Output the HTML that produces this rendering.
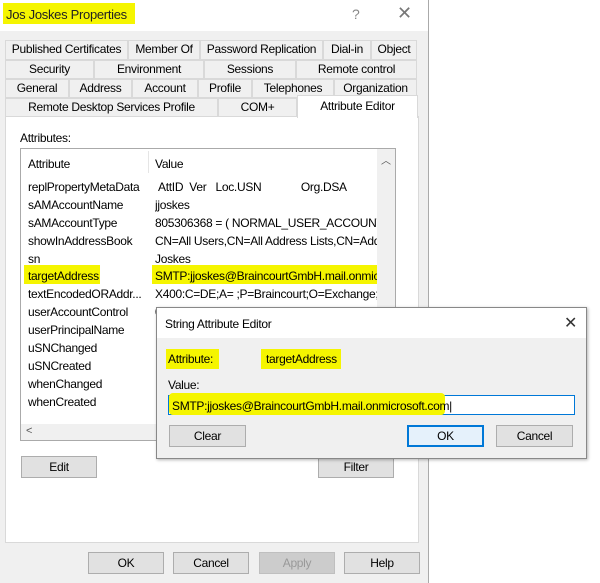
<!DOCTYPE html>
<html><head><style>
*{box-sizing:border-box;margin:0;padding:0}
body{width:600px;height:583px;background:#fff;position:relative;overflow:hidden;font-family:"Liberation Sans",sans-serif;font-size:12px;color:#000;letter-spacing:-0.3px}
.a{position:absolute}
.hl{background:#f5f500}
.tab{position:absolute;background:#f0f0f0;border:1px solid #d9d9d9;text-align:center;line-height:17px;font-size:12px}
.btn{position:absolute;background:#e1e1e1;border:1px solid #adadad;text-align:center;font-size:12px}
.row{position:absolute;left:28px;font-size:12px;white-space:nowrap}
.val{position:absolute;left:155px;font-size:12px;white-space:nowrap;width:222px;overflow:hidden}
</style></head><body>
<div class="a" style="left:0;top:0;width:429px;height:583px;background:#f0f0f0;border-right:1px solid #aaa"></div>
<div class="a" style="left:0;top:0;width:428px;height:31px;background:#fff"></div>
<div class="a hl" style="left:3px;top:3px;width:132px;height:21px"></div>
<div class="a" style="left:6px;top:7px;font-size:13px;color:#222">Jos Joskes Properties</div>
<div class="a" style="left:352px;top:6px;font-size:14px;color:#888">?</div>
<div class="a" style="left:397px;top:3px;font-size:18px;color:#777;font-weight:300">✕</div>

<div class="tab" style="left:5px;top:40px;width:123px;height:20px">Published Certificates</div>
<div class="tab" style="left:128px;top:40px;width:72px;height:20px">Member Of</div>
<div class="tab" style="left:200px;top:40px;width:123px;height:20px">Password Replication</div>
<div class="tab" style="left:323px;top:40px;width:48px;height:20px">Dial-in</div>
<div class="tab" style="left:371px;top:40px;width:46px;height:20px">Object</div>
<div class="tab" style="left:5px;top:60px;width:89px;height:19px">Security</div>
<div class="tab" style="left:94px;top:60px;width:110px;height:19px">Environment</div>
<div class="tab" style="left:204px;top:60px;width:92px;height:19px">Sessions</div>
<div class="tab" style="left:296px;top:60px;width:121px;height:19px">Remote control</div>
<div class="tab" style="left:5px;top:79px;width:64px;height:19px">General</div>
<div class="tab" style="left:69px;top:79px;width:63px;height:19px">Address</div>
<div class="tab" style="left:132px;top:79px;width:66px;height:19px">Account</div>
<div class="tab" style="left:198px;top:79px;width:54px;height:19px">Profile</div>
<div class="tab" style="left:252px;top:79px;width:82px;height:19px">Telephones</div>
<div class="tab" style="left:334px;top:79px;width:83px;height:19px">Organization</div>
<div class="tab" style="left:5px;top:98px;width:213px;height:19px">Remote Desktop Services Profile</div>
<div class="tab" style="left:218px;top:98px;width:79px;height:19px">COM+</div>
<div class="a" style="left:5px;top:116px;width:414px;height:427px;background:#fff;border:1px solid #d9d9d9"></div>
<div class="a" style="left:297px;top:95px;width:121px;height:23px;background:#fff;border:1px solid #d9d9d9;border-bottom:none;text-align:center;line-height:20px">Attribute Editor</div>
<div class="a" style="left:20px;top:131px">Attributes:</div>
<div class="a" style="left:20px;top:148px;width:376px;height:293px;border:1px solid #aaa;background:#fff"></div>
<div class="a" style="left:377px;top:149px;width:18px;height:275px;background:#f0f0f0"></div>
<div class="a" style="left:381px;top:152px;font-size:10px;color:#555">︿</div>
<div class="a" style="left:21px;top:424px;width:374px;height:16px;background:#f0f0f0"></div>
<div class="a" style="left:26px;top:425px;font-size:11px;color:#555">&lt;</div>
<div class="a" style="left:148px;top:151px;width:1px;height:22px;background:#e5e5e5"></div>
<div class="row" style="top:157px">Attribute</div>
<div class="val" style="top:157px">Value</div>
<div class="row" style="top:180px">replPropertyMetaData</div><div class="val" style="top:180px">&nbsp;AttID &nbsp;Ver &nbsp;&nbsp;Loc.USN &nbsp;&nbsp;&nbsp;&nbsp;&nbsp;&nbsp;&nbsp;&nbsp;&nbsp;&nbsp;&nbsp;&nbsp;Org.DSA</div>
<div class="row" style="top:198px">sAMAccountName</div><div class="val" style="top:198px">jjoskes</div>
<div class="row" style="top:216px">sAMAccountType</div><div class="val" style="top:216px">805306368 = ( NORMAL_USER_ACCOUNT</div>
<div class="row" style="top:234px">showInAddressBook</div><div class="val" style="top:234px">CN=All Users,CN=All Address Lists,CN=Address</div>
<div class="row" style="top:252px">sn</div><div class="val" style="top:252px">Joskes</div>
<div class="a hl" style="left:24px;top:265px;width:76px;height:19px"></div>
<div class="a hl" style="left:152px;top:265px;width:225px;height:19px"></div>
<div class="row" style="top:269px">targetAddress</div><div class="val" style="top:269px">SMTP:jjoskes@BraincourtGmbH.mail.onmicrosoft</div>
<div class="row" style="top:287px">textEncodedORAddr...</div><div class="val" style="top:287px">X400:C=DE;A= ;P=Braincourt;O=Exchange;S</div>
<div class="row" style="top:305px">userAccountControl</div><div class="val" style="top:305px">0x10200 = ( NORMAL_ACCOUNT | DONT_</div>
<div class="row" style="top:323px">userPrincipalName</div>
<div class="row" style="top:341px">uSNChanged</div>
<div class="row" style="top:359px">uSNCreated</div>
<div class="row" style="top:377px">whenChanged</div>
<div class="row" style="top:395px">whenCreated</div>

<div class="btn" style="left:21px;top:456px;width:76px;height:22px;line-height:20px">Edit</div>
<div class="btn" style="left:318px;top:456px;width:76px;height:22px;line-height:20px">Filter</div>
<div class="btn" style="left:88px;top:552px;width:76px;height:22px;line-height:20px">OK</div>
<div class="btn" style="left:173px;top:552px;width:76px;height:22px;line-height:20px">Cancel</div>
<div class="btn" style="left:259px;top:552px;width:76px;height:22px;line-height:20px;background:#ccc;border-color:#bfbfbf;color:#999">Apply</div>
<div class="btn" style="left:344px;top:552px;width:76px;height:22px;line-height:20px">Help</div>

<div class="a" style="left:156px;top:307px;width:431px;height:152px;background:#f0f0f0;border:1px solid #888;box-shadow:1px 1px 3px rgba(0,0,0,.3)"></div>
<div class="a" style="left:157px;top:308px;width:429px;height:30px;background:#fff"></div>
<div class="a" style="left:165px;top:317px;font-size:12px">String Attribute Editor</div>
<div class="a" style="left:564px;top:313px;font-size:16px;color:#333">✕</div>
<div class="a hl" style="left:166px;top:349px;width:53px;height:20px"></div>
<div class="a hl" style="left:261px;top:349px;width:80px;height:20px"></div>
<div class="a" style="left:168px;top:352px">Attribute:</div>
<div class="a" style="left:266px;top:352px">targetAddress</div>
<div class="a" style="left:168px;top:378px">Value:</div>
<div class="a" style="left:168px;top:395px;width:407px;height:20px;background:#fff;border:1px solid #0078d7"></div>
<div class="a hl" style="left:169px;top:393px;width:276px;height:22px;border-radius:4px"></div>
<div class="a" style="left:172px;top:399px">SMTP:jjoskes@BraincourtGmbH.mail.onmicrosoft.com|</div>
<div class="btn" style="left:169px;top:425px;width:77px;height:22px;line-height:20px">Clear</div>
<div class="btn" style="left:407px;top:425px;width:77px;height:22px;line-height:18px;border:2px solid #0078d7;background:#e5f1fb">OK</div>
<div class="btn" style="left:496px;top:425px;width:77px;height:22px;line-height:20px">Cancel</div>
</body></html>
